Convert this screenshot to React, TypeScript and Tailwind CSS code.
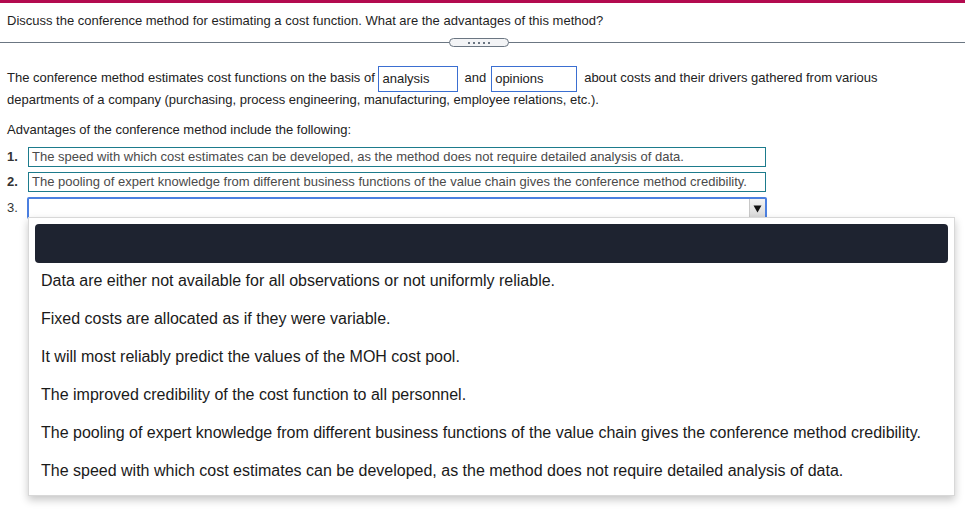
import React from 'react';

const options = [
  'Data are either not available for all observations or not uniformly reliable.',
  'Fixed costs are allocated as if they were variable.',
  'It will most reliably predict the values of the MOH cost pool.',
  'The improved credibility of the cost function to all personnel.',
  'The pooling of expert knowledge from different business functions of the value chain gives the conference method credibility.',
  'The speed with which cost estimates can be developed, as the method does not require detailed analysis of data.',
];

const answers = [
  'The speed with which cost estimates can be developed, as the method does not require detailed analysis of data.',
  'The pooling of expert knowledge from different business functions of the value chain gives the conference method credibility.',
];

const Blank: React.FC<{ value: string; width: string }> = ({ value, width }) => (
  <span
    className={`inline-block align-middle h-[26px] border border-[#3b6fd1] px-[3px] leading-[24px] text-[#222] ${width}`}
  >
    {value}
  </span>
);

export default function App() {
  return (
    <div className="relative w-[965px] h-[516px] overflow-hidden bg-white font-['Liberation_Sans',Arial,sans-serif] text-[#222]">
      {/* top accent */}
      <div className="h-[3px] bg-[#b30b4f]" />

      {/* question */}
      <div className="px-[7px] pt-[11px] text-[13px] leading-[14px] text-[#1f1f1f]">
        Discuss the conference method for estimating a cost function. What are the advantages of this method?
      </div>

      {/* divider with handle */}
      <div className="relative mt-[10px] h-[9px] flex items-center">
        <div className="w-full h-px bg-[#6b7682]" />
        <div className="absolute left-[449px] top-0 w-[60px] h-[9px] rounded-full border border-[#6b7682] bg-[#f3f4f6] flex items-center justify-center gap-[3px]">
          {[0, 1, 2, 3, 4].map((i) => (
            <span key={i} className="w-[2px] h-[2px] bg-[#6b7682]" />
          ))}
        </div>
      </div>

      {/* paragraph */}
      <div className="px-[7px] pt-[19px] text-[13px] leading-[20px]">
        <div>
          The conference method estimates cost functions on the basis of{' '}
          <Blank value="analysis" width="w-[80px]" />
          <span className="ml-[6px] mr-[5px]">and</span>
          <Blank value="opinions" width="w-[86px]" />
          <span className="ml-[7px]">about costs and their drivers gathered from various</span>
        </div>
        <div className="-mt-[2px]">
          departments of a company (purchasing, process engineering, manufacturing, employee relations, etc.).
        </div>
        <div className="mt-[10px]">Advantages of the conference method include the following:</div>
      </div>

      {/* answers */}
      <div className="relative px-[7px] pt-[7px] text-[13px]">
        {answers.map((a, i) => (
          <div key={i} className="flex items-center h-[20px] mb-[5px]">
            <span className="w-[21px] font-bold text-[13px] text-[#333]">{i + 1}.</span>
            <div className="w-[738px] h-[20px] border border-[#1d7b8c] px-[3px] leading-[18px] text-[#4a4a4a] whitespace-nowrap overflow-hidden">
              {a}
            </div>
          </div>
        ))}
        <div className="flex items-center h-[22px]">
          <span className="w-[20px] text-[13px] text-[#333]">3.</span>
          <div className="relative w-[740px] h-[22px] border-2 border-[#4b7fe0] rounded-[2px] bg-white">
            <div className="absolute right-0 top-0 w-[16px] h-[18px] bg-gradient-to-b from-[#f4f4f4] to-[#d9d9d9] border-l border-[#c8c8c8] flex items-center justify-center">
              <svg width="9" height="9" viewBox="0 0 9 9">
                <path d="M0.5 1.5 H8.5 L4.5 8.5 Z" fill="#111" />
              </svg>
            </div>
          </div>
        </div>

        {/* open dropdown */}
        <div className="absolute left-[28px] top-[77px] w-[927px] h-[279px] bg-white border border-[#d8d8d8] shadow-[0_4px_8px_rgba(0,0,0,0.22)] z-10">
          <div className="mx-[6px] mt-[6px] h-[39px] rounded-[4px] bg-[#1e2330]" />
          <div className="-mt-[1px]">
            {options.map((o) => (
              <div key={o} className="h-[38px] px-[12px] flex items-center text-[16px] text-[#1a1a1a] whitespace-nowrap">
                {o}
              </div>
            ))}
          </div>
        </div>
      </div>
    </div>
  );
}
